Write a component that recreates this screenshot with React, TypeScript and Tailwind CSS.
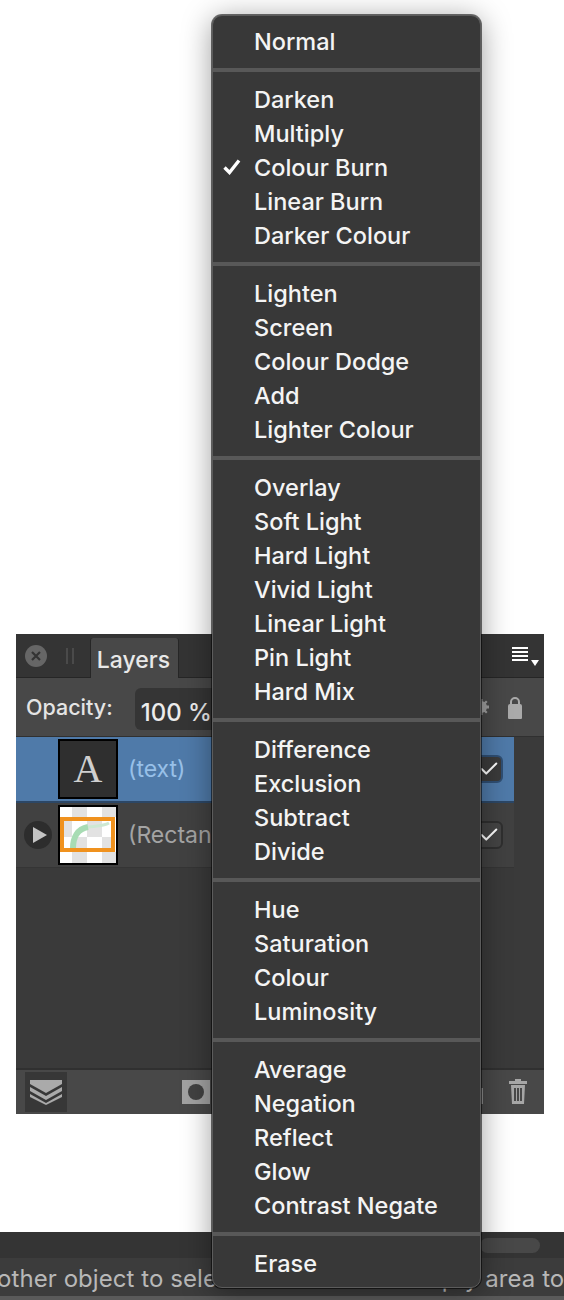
import { Check } from 'lucide-react';

const groups = [
  ['Normal'],
  ['Darken', 'Multiply', 'Colour Burn', 'Linear Burn', 'Darker Colour'],
  ['Lighten', 'Screen', 'Colour Dodge', 'Add', 'Lighter Colour'],
  ['Overlay', 'Soft Light', 'Hard Light', 'Vivid Light', 'Linear Light', 'Pin Light', 'Hard Mix'],
  ['Difference', 'Exclusion', 'Subtract', 'Divide'],
  ['Hue', 'Saturation', 'Colour', 'Luminosity'],
  ['Average', 'Negation', 'Reflect', 'Glow', 'Contrast Negate'],
  ['Erase'],
];

function BlendMenu() {
  return (
    <div className="absolute left-[212px] top-[15px] w-[269px] rounded-[10px] border border-[#5c5c5c] bg-[#383838] pt-[8px] pb-[7px] shadow-[0_0_0_1px_rgba(0,0,0,0.55),0_4px_30px_rgba(0,0,0,0.4)]">
      {groups.map((group, i) => (
        <div key={group[0]}>
          {i > 0 && <div className="my-[10px] h-[4px] bg-[#585858]" />}
          {group.map((item) => (
            <div key={item} className="relative flex h-[34px] items-center pt-[2px] pl-[41px] text-[23.5px] leading-none font-medium text-[#f4f4f4]">
              {item === 'Colour Burn' && (
                <svg viewBox="0 0 18 16" className="absolute left-[10px] top-[9px] h-[16px] w-[18px]">
                  <path d="M1.5 8.5L6.5 13.5L16 1.5" fill="none" stroke="#fff" strokeWidth="3.4" />
                </svg>
              )}
              {item}
            </div>
          ))}
        </div>
      ))}
    </div>
  );
}

function Thumb() {
  return (
    <svg viewBox="0 0 60 60" className="h-[60px] w-[60px] shrink-0">
      <rect width="60" height="60" fill="#000" />
      <rect x="2" y="2" width="56" height="56" fill="#fff" />
      <g fill="#e2e2e2">
        <rect x="14" y="2" width="15" height="10" />
        <rect x="44" y="2" width="14" height="10" />
        <rect x="3" y="12" width="11" height="20" />
        <rect x="29" y="12" width="15" height="20" />
        <rect x="14" y="32" width="15" height="15" />
        <rect x="44" y="32" width="13" height="15" />
        <rect x="14" y="47" width="15" height="11" />
        <rect x="44" y="47" width="14" height="11" />
      </g>
      <path d="M30 22 C38 21 46 21 51 18" fill="none" stroke="#cde8d3" strokeWidth="3" />
      <path d="M15 43 C15 33 19 24 30 22" fill="none" stroke="#a8dcb4" strokeWidth="6" />
      <rect x="4" y="14" width="51" height="31" fill="none" stroke="#f0921e" strokeWidth="4" />
    </svg>
  );
}

function RowCheck({ selected }: { selected?: boolean }) {
  return (
    <div className={`absolute left-[460px] flex h-[28px] w-[27px] items-center justify-end rounded-[6px] border-2 pr-[1px] ${selected ? 'border-[#2f4f74] bg-[#3b3b3b]' : 'border-[#2f2f2f] bg-[#444444]'}`}>
      <Check className="h-[22px] w-[22px] text-white" strokeWidth={2.2} />
    </div>
  );
}

function Panel() {
  return (
    <div className="ml-4 flex h-[480px] w-[528px] flex-col bg-[#3a3a3a]">
      {/* tabs */}
      <div className="relative flex h-[44px] items-end border-b border-[#262626] bg-[#343434]">
        <div className="absolute left-[9px] top-[11px] flex h-[22px] w-[22px] items-center justify-center rounded-full bg-[#666666]">
          <svg viewBox="0 0 12 12" className="h-[12px] w-[12px]">
            <path d="M2 2L10 10M10 2L2 10" stroke="#333" strokeWidth="2.2" />
          </svg>
        </div>
        <div className="absolute left-[50px] top-[14px] h-[16px] w-[8px] border-x-2 border-[#4a4a4a]" />
        <div className="relative -mb-px ml-[74px] flex h-[40px] w-[89px] items-center justify-center rounded-t-[3px] border-x border-[#262626] bg-[#484848] pt-[4px] pr-[2px] text-[23px] leading-none font-medium text-[#e8e8e8]">
          Layers
        </div>
        <div className="absolute left-[496px] top-[13px] flex flex-col gap-[2px]">
          <div className="h-[2px] w-[16px] bg-white" />
          <div className="h-[2px] w-[16px] bg-white" />
          <div className="h-[2px] w-[16px] bg-white" />
          <div className="h-[2px] w-[16px] bg-white" />
        </div>
        <svg viewBox="0 0 8 6" className="absolute left-[515px] top-[26px] h-[6px] w-[8px]">
          <path d="M0 0H8L4 6Z" fill="#fff" />
        </svg>
      </div>

      {/* opacity */}
      <div className="relative flex h-[59px] items-center border-b border-[#303030] bg-[#484848]">
        <span className="mt-[2px] ml-[10px] text-[21.5px] leading-none font-medium text-[#e4e4e4]">Opacity:</span>
        <div className="mt-[4px] ml-[22px] flex h-[42px] w-[90px] items-center rounded-[6px] bg-[#353535] pt-[8px] pl-[6px] text-[24px] leading-none font-medium text-[#ececec]">
          100 %
        </div>
        <svg viewBox="0 0 16 16" className="absolute left-[457px] top-[21px] h-[16px] w-[16px]">
          <path d="M6.5 0H9.5V2.2L11.5 3L13 1.5L14.6 3.1L13 4.6L13.8 6.5H16V9.5H13.8L13 11.4L14.6 12.9L13 14.5L11.5 13L9.5 13.8V16H6.5V13.8L4.5 13L3 14.5L1.4 12.9L3 11.4L2.2 9.5H0V6.5H2.2L3 4.6L1.4 3.1L3 1.5L4.5 3L6.5 2.2Z" fill="#a0a0a0" />
        </svg>
        <svg viewBox="0 0 16 24" className="absolute left-[491px] top-[18px] h-[24px] w-[16px]">
          <path d="M1 10a2 2 0 0 1 2-2h0V6a5 5 0 0 1 10 0v2h0a2 2 0 0 1 2 2v12a1 1 0 0 1-1 1H2a1 1 0 0 1-1-1ZM5 8h6V6a3 3 0 0 0-6 0Z" fill="#aaaaaa" fillRule="evenodd" />
        </svg>
      </div>

      {/* layers */}
      <div className="relative flex h-[66px] w-[498px] items-center border-b-2 border-[#2c4766] bg-[#4f7aa9]">
        <div className="ml-[42px] flex h-[60px] w-[60px] shrink-0 items-center justify-center border-2 border-black bg-[#2f2f2f] font-['Liberation_Serif',serif] text-[40px] leading-none text-[#cfcfcf]">
          A
        </div>
        <span className="ml-[10px] text-[23px] leading-none text-[#98c0e8]">(text)</span>
        <RowCheck selected />
      </div>
      <div className="relative flex h-[65px] w-[498px] items-center border-b border-[#353535] bg-[#414141]">
        <div className="absolute left-[8px] flex h-[28px] w-[28px] items-center justify-center rounded-full bg-[#2d2d2d]">
          <svg viewBox="0 0 14 16" className="ml-[3px] h-[16px] w-[14px]">
            <path d="M0 0L14 8L0 16Z" fill="#c4c4c4" />
          </svg>
        </div>
        <div className="ml-[42px]">
          <Thumb />
        </div>
        <span className="ml-[10px] text-[23px] leading-none whitespace-nowrap text-[#a4a4a4]">(Rectangle)</span>
        <RowCheck />
      </div>

      <div className="flex-1" />

      {/* bottom tools */}
      <div className="relative flex h-[46px] items-center border-t-2 border-[#303030] bg-[#484848]">
        <div className="ml-[9px] flex h-[40px] w-[42px] items-center justify-center bg-[#373737]">
          <svg viewBox="0 0 34 26" className="h-[26px] w-[34px]">
            <path d="M1 1H33V5L17 14L1 5Z" fill="#aaaaaa" />
            <path d="M1 8L17 17L33 8V12L17 21L1 12Z" fill="#aaaaaa" />
            <path d="M1 15L17 24L33 15V18L17 26L1 18Z" fill="#aaaaaa" />
          </svg>
        </div>
        <div className="absolute left-[166px] top-[10px] flex h-[24px] w-[28px] items-center justify-center bg-[#a2a2a2]">
          <div className="h-[16px] w-[16px] rounded-full bg-[#424242]" />
        </div>
        <div className="absolute left-[465px] top-[18px] h-[16px] w-[2px] bg-[#8a8a8a]" />
        <svg viewBox="0 0 20 26" className="absolute left-[492px] top-[8px] h-[26px] w-[20px]">
          <path d="M7 3V1H13V3H19V6H1V3Z" fill="#a6a6a6" />
          <path d="M3 7H17L16 26H4ZM6 10V23H8V10ZM9 10V23H11V10ZM12 10V23H14V10Z" fill="#a6a6a6" fillRule="evenodd" />
        </svg>
      </div>
    </div>
  );
}

function StatusBar() {
  return (
    <div className="flex h-[68px] flex-col overflow-hidden bg-[#3c3c3c]">
      <div className="flex h-[26px] items-center justify-end bg-[#343434] pr-[24px]">
        <div className="h-[15px] w-[60px] rounded-full bg-[#484848]" />
      </div>
      <div className="-ml-[3px] flex-1 pt-[9px] text-[24px] leading-none tracking-[0.07px] whitespace-nowrap text-[#b8b8b8]">
        other object to select it. Click on an empty area to
      </div>
      <div className="h-[4px] bg-[#5a5a5a]" />
    </div>
  );
}

export default function App() {
  return (
    <div className="relative h-[1300px] w-[564px] overflow-hidden bg-white font-['Inter','Liberation_Sans',sans-serif]">
      <div className="h-[634px]" />
      <Panel />
      <div className="h-[118px]" />
      <StatusBar />
      <BlendMenu />
    </div>
  );
}
